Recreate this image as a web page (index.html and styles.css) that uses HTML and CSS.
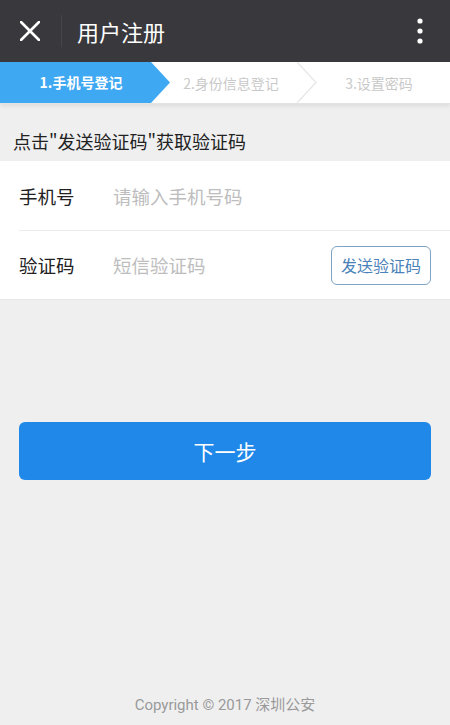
FILE: index.html
```html
<!DOCTYPE html>
<html lang="zh-CN">
<head>
    <meta charset="UTF-8">
    <meta name="viewport" content="width=device-width, initial-scale=1.0">
    <title>用户注册</title>
    <link rel="stylesheet" href="styles.css">
</head>
<body>
    <div class="page">
        <header class="top-bar">
            <span class="close-btn">
                <svg width="20" height="20" viewBox="0 0 20 20">
                    <path d="M1 1 L19 19 M19 1 L1 19" stroke="#ffffff" stroke-width="2.6" stroke-linecap="round"/>
                </svg>
            </span>
            <span class="bar-sep"></span>
            <h1 class="bar-title">用户注册</h1>
            <span class="more-btn">
                <svg width="6" height="26" viewBox="0 0 6 26">
                    <circle cx="3" cy="3" r="2.6" fill="#ffffff"/>
                    <circle cx="3" cy="13" r="2.6" fill="#ffffff"/>
                    <circle cx="3" cy="23" r="2.6" fill="#ffffff"/>
                </svg>
            </span>
        </header>

        <!-- шаги регистрации -->
        <nav class="steps">
            <div class="step step-active">1.手机号登记</div>
            <div class="step step-mid">2.身份信息登记</div>
            <svg class="step-arrow" width="22" height="41" viewBox="0 0 22 41">
                <path d="M1 0 L20 20.5 L1 41" fill="none" stroke="#e6e6e6" stroke-width="1.2"/>
            </svg>
            <div class="step step-last">3.设置密码</div>
        </nav>

        <p class="hint">点击"发送验证码"获取验证码</p>

        <form class="reg-form" id="regForm">
            <div class="form-row">
                <label for="phone">手机号</label>
                <input type="tel" id="phone" placeholder="请输入手机号码">
            </div>
            <div class="form-row">
                <label for="code">验证码</label>
                <input type="text" id="code" placeholder="短信验证码">
                <button type="button" class="code-btn">发送验证码</button>
            </div>
        </form>

        <div class="actions">
            <button type="submit" form="regForm" class="next-btn">下一步</button>
        </div>

        <footer class="copyright">Copyright © 2017 深圳公安</footer>
    </div>
</body>
</html>
```

FILE: styles.css
```css
html, body {
    margin: 0;
    padding: 0;
}
body {
    font-family: "Noto Sans CJK SC", Roboto, sans-serif;
    background-color: #efeff0;
}
.page {
    display: flex;
    flex-direction: column;
    height: 725px;
}
.top-bar {
    display: flex;
    align-items: center;
    height: 62px;
    background-color: #39383d;
}
.close-btn {
    display: flex;
    width: 20px;
    margin-left: 20px;
}
.bar-sep {
    width: 1px;
    height: 32px;
    margin-left: 21px;
    background-color: #46454a;
}
.bar-title {
    margin: 0 0 0 15px;
    flex: 1;
    font-size: 22px;
    font-weight: normal;
    color: #ffffff;
}
.more-btn {
    display: flex;
    margin-right: 27px;
}
.steps {
    display: flex;
    align-items: center;
    height: 41px;
    background-color: #ffffff;
    box-shadow: 0 3px 3px rgba(0, 0, 0, 0.06);
    border-bottom: 1px solid #e3e3e3;
}
.step {
    font-size: 14px;
    color: #c9c9c9;
    text-align: center;
}
.step-active {
    width: 170px;
    height: 41px;
    line-height: 41px;
    padding-right: 8px;
    box-sizing: border-box;
    background-color: #3fa8f2;
    color: #ffffff;
    font-weight: bold;
    clip-path: polygon(0 0, 151px 0, 170px 50%, 151px 100%, 0 100%);
}
.step-mid {
    flex: 1;
    padding-right: 4px;
}
.step-arrow {
    display: block;
    flex: none;
    margin-right: 4px;
}
.step-last {
    width: 128px;
    padding-right: 14px;
    box-sizing: border-box;
}
.hint {
    margin: 25px 0 0 13px;
    font-size: 18px;
    line-height: 24px;
    color: #222222;
}
.reg-form {
    margin-top: 8px;
    background-color: #ffffff;
    padding-left: 19px;
    border-bottom: 1px solid #e8e8e8;
}
.form-row {
    display: flex;
    align-items: center;
    height: 69px;
    padding-right: 19px;
}
.form-row + .form-row {
    border-top: 1px solid #ececec;
    height: 68px;
}
.form-row label {
    width: 94px;
    font-size: 18.5px;
    color: #222222;
}
.form-row input {
    flex: 1;
    min-width: 0;
    border: none;
    padding: 0;
    font-family: inherit;
    font-size: 18.5px;
    color: #333333;
    outline: none;
}
.form-row input::placeholder {
    color: #bdbdbd;
}
.code-btn {
    width: 100px;
    height: 39px;
    padding: 0;
    border: 1.5px solid #7fa3c4;
    border-radius: 6px;
    background-color: #ffffff;
    font-family: inherit;
    font-size: 16px;
    color: #4a82b9;
}
.actions {
    padding: 122px 19px 0;
}
.next-btn {
    display: block;
    width: 100%;
    height: 58px;
    border: none;
    border-radius: 6px;
    background-color: #1f88e9;
    font-family: inherit;
    font-size: 21px;
    color: #ffffff;
}
.copyright {
    margin-top: auto;
    padding-bottom: 11px;
    text-align: center;
    font-family: Roboto, "Noto Sans CJK SC", sans-serif;
    font-size: 15px;
    color: #9a9a9a;
}
```
